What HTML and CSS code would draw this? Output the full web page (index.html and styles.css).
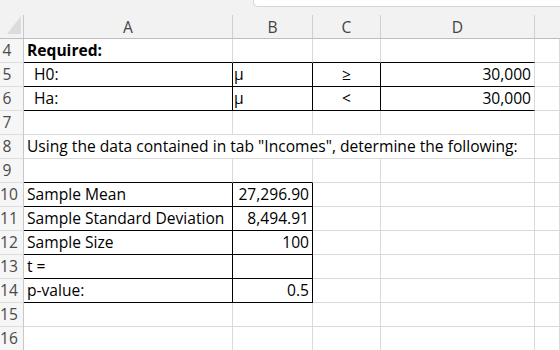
FILE: index.html
```html
<!DOCTYPE html>
<html>
<head>
<meta charset="utf-8">
<link rel="stylesheet" href="styles.css">
</head>
<body>
<div class="top"><div class="namebox"></div></div>
<div class="sheet">
  <div class="ch corner"><svg width="23" height="23" viewBox="0 0 23 23"><polygon points="7,19 21,19 21,1" fill="#dcdcdc"/></svg></div>
  <div class="ch">A</div><div class="ch">B</div><div class="ch">C</div><div class="ch">D</div><div class="ch last"></div>

  <div class="rh">4</div>
  <div class="c bb"><b>Required:</b></div><div class="c bb"></div><div class="c bb"></div><div class="c bb"></div><div class="c"></div>

  <div class="rh">5</div>
  <div class="c bb br ind">H0:</div><div class="c bb br mu">µ</div><div class="c bb br ctr">≥</div><div class="c bb num">30,000</div><div class="c"></div>

  <div class="rh">6</div>
  <div class="c bb br ind">Ha:</div><div class="c bb br mu">µ</div><div class="c bb br ctr">&lt;</div><div class="c bb num">30,000</div><div class="c"></div>

  <div class="rh">7</div>
  <div class="c"></div><div class="c"></div><div class="c"></div><div class="c"></div><div class="c"></div>

  <div class="rh">8</div>
  <div class="c span4">Using the data contained in tab "Incomes", determine the following:</div><div class="c"></div>

  <div class="rh">9</div>
  <div class="c bb"></div><div class="c bb"></div><div class="c"></div><div class="c"></div><div class="c"></div>

  <div class="rh">10</div>
  <div class="c bb br">Sample Mean</div><div class="c bb br num">27,296.90</div><div class="c"></div><div class="c"></div><div class="c"></div>

  <div class="rh">11</div>
  <div class="c bb br">Sample Standard Deviation</div><div class="c bb br num">8,494.91</div><div class="c"></div><div class="c"></div><div class="c"></div>

  <div class="rh">12</div>
  <div class="c bb br">Sample Size</div><div class="c bb br num">100</div><div class="c"></div><div class="c"></div><div class="c"></div>

  <div class="rh">13</div>
  <div class="c bb br">t =</div><div class="c bb br num"></div><div class="c"></div><div class="c"></div><div class="c"></div>

  <div class="rh">14</div>
  <div class="c bb br">p-value:</div><div class="c bb br num">0.5</div><div class="c"></div><div class="c"></div><div class="c"></div>

  <div class="rh">15</div>
  <div class="c"></div><div class="c"></div><div class="c"></div><div class="c"></div><div class="c"></div>

  <div class="rh">16</div>
  <div class="c"></div><div class="c"></div><div class="c"></div><div class="c"></div><div class="c"></div>
</div>
</body>
</html>
```

FILE: styles.css
```css
* { box-sizing: border-box; }
html, body { margin: 0; padding: 0; background: #fff; overflow: hidden; }
body {
  width: 560px;
  height: 350px;
  font-family: "Open Sans", Lato, sans-serif;
  font-size: 15.6px;
  color: #000;
}
.top {
  height: 15px;
  background: #f2f2f2;
  display: flex;
}
.namebox {
  margin-left: 253px;
  flex: 1;
  height: 7px;
  background: #fff;
  border-left: 1px solid #d4d4d4;
  border-bottom: 1px solid #d4d4d4;
  border-bottom-left-radius: 5px;
}
.sheet {
  display: grid;
  grid-template-columns: 24px 209px 80px 68px 154px 1fr;
  grid-auto-rows: 24px;
}
.ch {
  background: #f2f2f2;
  border-bottom: 1px solid #bdbdbd;
  border-right: 1px solid #d0d0d0;
  color: #444;
  text-align: center;
  line-height: 24px;
  white-space: nowrap;
}
.ch.corner { border-right: 1px solid #c8c8c8; display: flex; }
.ch.last { border-right: none; }
.rh {
  background: #f6f6f6;
  border-right: 1px solid #c8c8c8;
  border-bottom: 1px solid #dcdcdc;
  color: #4a4a4a;
  text-align: center;
  padding-right: 9px;
  line-height: 23px;
  white-space: nowrap;
  overflow: visible;
}
.c {
  border-right: 1px solid #dadada;
  border-bottom: 1px solid #dadada;
  line-height: 23px;
  padding: 0 3px 0 3px;
  white-space: nowrap;
}
.c b { font-weight: 700; }
.bb { border-bottom-color: #000; }
.br { border-right-color: #000; }
.ind { padding-left: 10px; }
.mu { padding-left: 1px; }
.ctr { text-align: center; }
.num { text-align: right; }
.span4 { grid-column: span 4; }
```
